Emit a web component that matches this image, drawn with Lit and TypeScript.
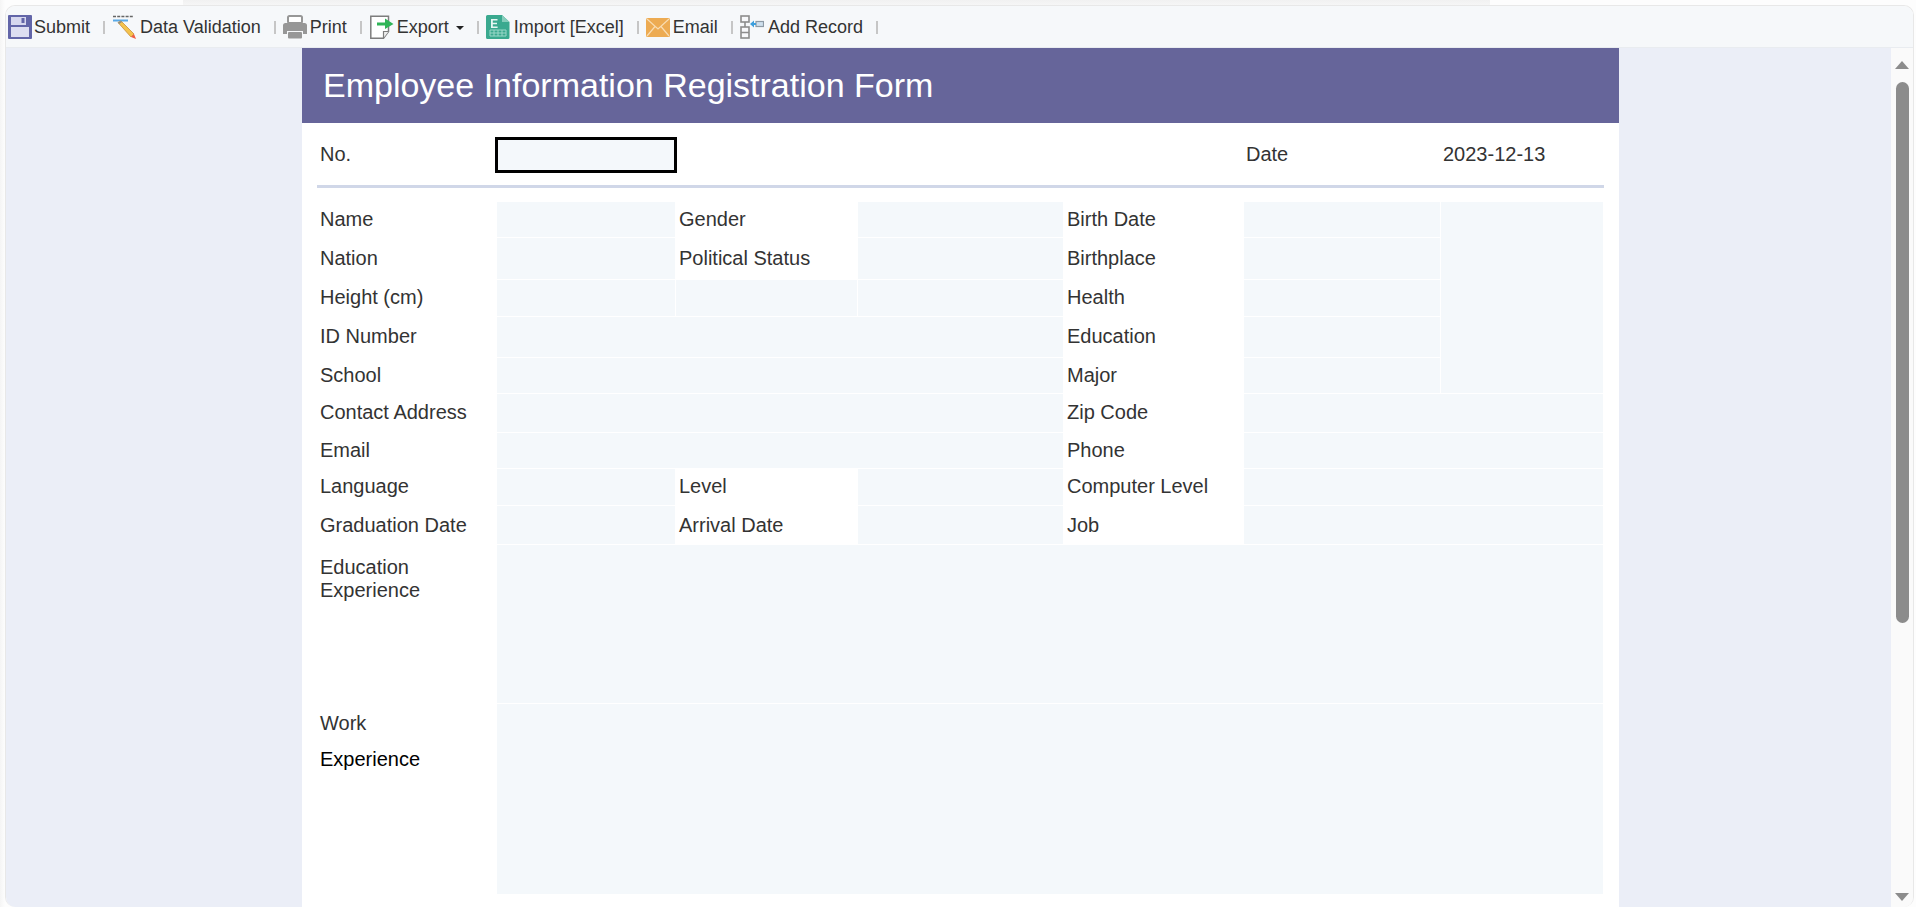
import { LitElement, html, css, svg } from "lit";
import { customElement } from "lit/decorators.js";

const icons = {
  submit: svg`<rect x="0" y="0" width="24" height="24" rx="1" fill="#6265a8"/><rect x="3" y="2" width="15" height="8" fill="#d6d7ee"/><rect x="13.5" y="3" width="3" height="5" fill="#6265a8"/><rect x="3" y="12" width="18" height="10" fill="#dcddf1"/>`,
  data: svg`<path d="M0 1.5H21" stroke="#666" stroke-width="1.6" stroke-dasharray="3 1.2"/><path d="M0 5.5H15" stroke="#5aa9e6" stroke-width="2"/><path d="M5 7.5 L8 6 L21 19 L18 22Z" fill="#f4c34d" stroke="#c98f3a" stroke-width=".8"/><path d="M18 22 L21 19 L23 24Z" fill="#ef5f45"/><path d="M5 7.5 L8 6 L9 7 L6 9Z" fill="#8a8a8a"/>`,
  print: svg`<rect x="5" y="1" width="14" height="7" rx="1.5" fill="#fff" stroke="#979797" stroke-width="2"/><path d="M2.5 8h19a2.5 2.5 0 0 1 2.5 2.5V19h-4v-3H4v3H0v-8.500A2.500 2.500 0 0 1 2.500 8z" fill="#979797"/><rect x="5" y="17" width="14" height="6.500" rx="1" fill="#979797"/>`,
  export: svg`<path d="M.8 1.200H18.500V16.500L13.500 23.200H.8Z" fill="#fff" stroke="#7d7d7d" stroke-width="1.500"/><path d="M13.500 23V16.500H18.500" fill="#eee" stroke="#7d7d7d" stroke-width="1.200"/><path d="M7 7.500H15V3.500L23.500 9L15 14V10.500H7Z" fill="#2fb457"/>`,
  excel: svg`<path d="M1.500 0H16L23.500 7V22.500A1.500 1.500 0 0 1 22 24H1.500A1.500 1.500 0 0 1 0 22.500V1.500A1.500 1.500 0 0 1 1.500 0Z" fill="#3aa98f"/><path d="M16 0L23.500 7H16Z" fill="#86cdbb"/><path d="M5 4h6.500v1.500H6.800v2.200h4.200v1.500H6.800v2.300h4.800V13H5Z" fill="#e6f6f2"/><path d="M4 15H20M4 18H20M4 21H20M4 15V21M8 15V21M12 15V21M16 15V21M20 15V21" stroke="#9bd8c9" stroke-width="1"/>`,
  email: svg`<rect x="0" y="3" width="24" height="19" rx="1.500" fill="#edab52"/><path d="M1 4L12 14L23 4M1 21L9 11.500M23 21L15 11.500" fill="none" stroke="#f8dcb2" stroke-width="1.200"/>`,
  add: svg`<rect x="1" y="1" width="8" height="6" fill="#f8f9fb" stroke="#8d8d8d" stroke-width="1.600"/><rect x="1" y="12" width="8" height="11" fill="#f8f9fb" stroke="#8d8d8d" stroke-width="1.600"/><path d="M1 17.500H9" stroke="#8d8d8d" stroke-width="1.600"/><path d="M5 7V12" stroke="#8d8d8d" stroke-width="1.600"/><rect x="16" y="6.500" width="7.500" height="5" fill="#cfe0ee" stroke="#8d9aa5" stroke-width="1.200"/><path d="M10 9L14 5.500V8H16V10H14V12.500Z" fill="#3d9fdd"/>`,
};

@customElement("app-root")
export class AppRoot extends LitElement {
  static styles = css`
    :host {
      display: block;
      height: 907px;
      overflow: hidden;
      background: linear-gradient(90deg, #f5f5f5, #fdfdfd 5px);
      font-family: "Liberation Sans", Arial, sans-serif;
      color: #333;
    }
    .strip {
      height: 5px;
      margin: 0 426px 0 183px;
      background: linear-gradient(#f1f1f1, #f6f6f6);
    }
    .frame {
      height: 902px;
      margin: 0 2px 0 5px;
      box-sizing: border-box;
      border: 1px solid #e8e8e8;
      border-bottom: 0;
      border-radius: 10px;
      overflow: hidden;
      display: flex;
      flex-direction: column;
    }
    .toolbar {
      height: 42px;
      flex: none;
      box-sizing: border-box;
      background: #f6f8fa;
      border-bottom: 1px solid #e9ecf0;
      display: flex;
      align-items: center;
      padding-left: 2px;
      font-size: 18px;
      white-space: nowrap;
    }
    .tool {
      display: flex;
      align-items: center;
      gap: 3px;
      height: 24px;
    }
    .tool span {
      margin-top: 2px;
    }
    .tool svg {
      width: 24px;
      height: 24px;
      flex: none;
    }
    .tool.nudge {
      margin-left: 1px;
    }
    .tool.wide {
      gap: 4px;
    }
    .tool.tight {
      gap: 2px;
    }
    .caret {
      width: 0;
      height: 0;
      margin-left: 4px;
      margin-top: 3px;
      border-left: 4px solid transparent;
      border-right: 4px solid transparent;
      border-top: 4px solid #222;
    }
    .sep {
      width: 2px;
      height: 13px;
      flex: none;
      margin: 1px 7px 0 13px;
      background: #c6c6c6;
    }
    .main {
      flex: 1;
      min-height: 0;
      display: flex;
    }
    .canvas {
      flex: 1;
      min-width: 0;
      overflow: hidden;
      background: #ebeef7;
    }
    .form {
      width: 1317px;
      margin-left: 296px;
      height: 100%;
      background: #fff;
    }
    .title {
      height: 75px;
      box-sizing: border-box;
      padding-left: 21px;
      display: flex;
      align-items: center;
      background: #66659a;
      color: #fff;
      font-size: 34px;
    }
    .head,
    .grid {
      display: grid;
      grid-template-columns: 179px 178px 181px 205px 179px 196px 162px;
      column-gap: 1px;
      margin: 0 15px;
      font-size: 20px;
    }
    .head {
      height: 62px;
      align-items: center;
    }
    .input {
      height: 36px;
      width: 182px;
      margin: 2px 0 0 -2px;
      box-sizing: border-box;
      border: 3px solid #000;
      background: #f4f8fb;
    }
    .rule {
      height: 3px;
      margin: 0 15px 14px;
      background: #d0d7e8;
    }
    .grid {
      grid-template-rows: 35px 41px 36px 40px 35px 38px 35px 36px 38px 158px 190px;
      row-gap: 1px;
    }
    .l {
      padding-left: 3px;
      align-self: center;
    }
    .l.hi {
      margin-bottom: 2px;
    }
    .l.dt {
      padding-left: 2px;
    }
    .v {
      background: #f4f8fb;
    }
    .s2 {
      grid-column: span 2;
    }
    .s3 {
      grid-column: span 3;
    }
    .s6 {
      grid-column: span 6;
    }
    .photo {
      grid-row: span 5;
    }
    .edu {
      align-self: start;
      padding-top: 11px;
      line-height: 23px;
    }
    .work {
      align-self: start;
      padding-top: 1px;
      line-height: 36px;
    }
    .black {
      color: #000;
    }
    .scroll {
      width: 22px;
      flex: none;
      box-sizing: border-box;
      background: #fafafa;
      padding: 13px 0 6px;
      display: flex;
      flex-direction: column;
      align-items: center;
    }
    .up,
    .down {
      width: 0;
      height: 0;
      flex: none;
      border-left: 7.5px solid transparent;
      border-right: 7.5px solid transparent;
    }
    .up {
      border-bottom: 8px solid #8c8c8c;
    }
    .down {
      border-top: 8px solid #8c8c8c;
      margin-top: auto;
    }
    .thumb {
      width: 13px;
      height: 541px;
      flex: none;
      margin-top: 13px;
      border-radius: 7px;
      background: #8c8c8c;
    }
  `;

  private tool(icon: keyof typeof icons, label: string, mod = "", caret = false) {
    return html`<div class="tool ${mod}">
        <svg viewBox="0 0 24 24">${icons[icon]}</svg>
        <span>${label}</span>${caret ? html`<i class="caret"></i>` : ""}
      </div>
      <div class="sep"></div>`;
  }

  render() {
    return html`
      <div class="strip"></div>
      <div class="frame">
        <div class="toolbar">
          ${this.tool("submit", "Submit", "tight")}
          ${this.tool("data", "Data Validation", "nudge")}
          ${this.tool("print", "Print")}
          ${this.tool("export", "Export", "nudge", true)}
          ${this.tool("excel", "Import [Excel]", "wide")}
          ${this.tool("email", "Email")}
          ${this.tool("add", "Add Record", "wide")}
        </div>
        <div class="main">
          <div class="canvas">
            <div class="form">
              <div class="title">Employee Information Registration Form</div>
              <div class="head">
                <div class="l">No.</div>
                <div class="input"></div>
                <div></div>
                <div></div>
                <div></div>
                <div class="l dt">Date</div>
                <div class="l dt">2023-12-13</div>
              </div>
              <div class="rule"></div>
              <div class="grid">
                <div class="l">Name</div><div class="v"></div>
                <div class="l">Gender</div><div class="v"></div>
                <div class="l">Birth Date</div><div class="v"></div>
                <div class="v photo"></div>

                <div class="l">Nation</div><div class="v"></div>
                <div class="l">Political Status</div><div class="v"></div>
                <div class="l">Birthplace</div><div class="v"></div>

                <div class="l hi">Height (cm)</div><div class="v"></div>
                <div class="v"></div><div class="v"></div>
                <div class="l hi">Health</div><div class="v"></div>

                <div class="l hi">ID Number</div><div class="v s3"></div>
                <div class="l hi">Education</div><div class="v"></div>

                <div class="l">School</div><div class="v s3"></div>
                <div class="l">Major</div><div class="v"></div>

                <div class="l hi">Contact Address</div><div class="v s3"></div>
                <div class="l hi">Zip Code</div><div class="v s2"></div>

                <div class="l">Email</div><div class="v s3"></div>
                <div class="l">Phone</div><div class="v s2"></div>

                <div class="l hi">Language</div><div class="v"></div>
                <div class="l hi">Level</div><div class="v"></div>
                <div class="l hi">Computer Level</div><div class="v s2"></div>

                <div class="l">Graduation Date</div><div class="v"></div>
                <div class="l">Arrival Date</div><div class="v"></div>
                <div class="l">Job</div><div class="v s2"></div>

                <div class="l edu">Education Experience</div><div class="v s6"></div>

                <div class="l work">Work<br /><span class="black">Experience</span></div><div class="v s6"></div>
              </div>
            </div>
          </div>
          <div class="scroll">
            <div class="up"></div>
            <div class="thumb"></div>
            <div class="down"></div>
          </div>
        </div>
      </div>
    `;
  }
}
